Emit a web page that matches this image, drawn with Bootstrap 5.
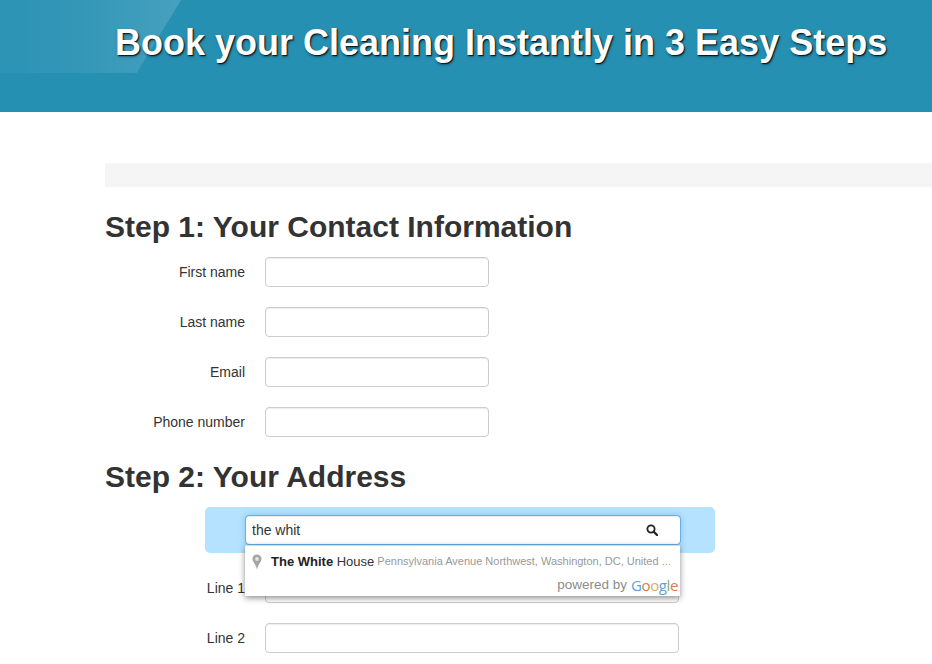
<!DOCTYPE html>
<html lang="en">
<head>
  <meta charset="UTF-8" />
  <meta name="viewport" content="width=device-width, initial-scale=1.0" />
  <title>Book your Cleaning</title>
  <link href="https://cdn.jsdelivr.net/npm/bootstrap@5.3.3/dist/css/bootstrap.min.css" rel="stylesheet">
  <style>
    html, body { height: 664px; overflow: hidden; }
    body { font-family: "Liberation Sans", Arial, sans-serif; font-size: 14px; color: #333; background: #fff; }
    .hero { height: 112px; background: #2690b3; padding-left: 115px; overflow: hidden; }
    .hero::before { content: ""; position: absolute; left: 0; top: 0; width: 181px; height: 73px; background: linear-gradient(90deg, rgba(255,255,255,.03) 0%, rgba(255,255,255,.05) 35%, rgba(255,255,255,.15) 100%); clip-path: polygon(0 0, 100% 0, 75.5% 100%, 0 100%); }
    .hero-title { font-size: 36px; font-weight: 700; line-height: 40px; color: #fff; text-shadow: 1px 1px 1px rgba(0,0,0,.8), 1px 2px 3px rgba(0,0,0,.35); margin: 23px 0 0; white-space: nowrap; }
    .page-body { padding-left: 105px; }
    .crumb-bar { height: 24px; margin-top: 51px; background: #f5f5f5; }
    .step-title { font-size: 30px; font-weight: 700; line-height: 33px; color: #333; margin: 23px 0 14px; }
    .field-row { margin-bottom: 20px; }
    .field-label { width: 140px; margin-right: 20px; text-align: right; color: #333; }
    .field-input { width: 224px; height: 30px; padding: 4px 6px; font-size: 14px; border-color: #ccc; border-radius: 4px; box-shadow: inset 0 1px 1px rgba(0,0,0,.075); }
    .field-wide { width: 414px; }
    .lookup-panel { width: 510px; height: 46px; margin: 0 0 20px 100px; padding: 8px 34px 8px 40px; background: #b5e3ff; border-radius: 5px; }
    .lookup-box { height: 30px; }
    .lookup-input { width: 436px; height: 30px; padding: 4px 34px 4px 6px; font-size: 14px; color: #333; border-color: #66afe9; border-radius: 4px; box-shadow: inset 0 1px 1px rgba(0,0,0,.075), 0 0 6px rgba(102,175,233,.6); }
    .lookup-icon { position: absolute; left: 401px; top: 9px; }
    .suggest-menu { position: absolute; left: 0; top: 30px; width: 435px; height: 51px; z-index: 5; background: #fff; border-top: 1px solid #d9d9d9; box-shadow: 0 2px 6px rgba(0,0,0,.45); }
    .suggest-item { height: 31px; padding: 0 7px; white-space: nowrap; }
    .suggest-pin { flex: 0 0 auto; margin-right: 9px; }
    .suggest-name { font-size: 13px; color: #333; margin-right: 3px; }
    .suggest-name b { color: #222; }
    .suggest-addr { font-size: 11px; color: #999; }
    .suggest-foot { padding-right: 2px; font-size: 13.5px; line-height: 16px; color: #8c8c8c; }
    .brand-word { font-family: "Open Sans", sans-serif; font-size: 15px; font-weight: 400; letter-spacing: -.4px; margin-left: 4px; }
    .c-blue { color: #5a9fe0; }
    .c-red { color: #cf7d50; }
    .c-yel { color: #d9ab62; }
    .c-grn { color: #7fae74; }
  </style>
</head>
<body>
  <header class="hero position-relative">
    <h1 class="hero-title position-relative">Book your Cleaning Instantly in 3 Easy Steps</h1>
  </header>

  <div class="page-body">
    <div class="crumb-bar"></div>

    <h2 class="step-title">Step 1: Your Contact Information</h2>
    <div class="field-row d-flex align-items-center">
      <label class="field-label" for="first_name">First name</label>
      <input type="text" id="first_name" class="form-control field-input" />
    </div>
    <div class="field-row d-flex align-items-center">
      <label class="field-label" for="last_name">Last name</label>
      <input type="text" id="last_name" class="form-control field-input" />
    </div>
    <div class="field-row d-flex align-items-center">
      <label class="field-label" for="email">Email</label>
      <input type="text" id="email" class="form-control field-input" />
    </div>
    <div class="field-row d-flex align-items-center">
      <label class="field-label" for="phone">Phone number</label>
      <input type="text" id="phone" class="form-control field-input" />
    </div>

    <h2 class="step-title">Step 2: Your Address</h2>
    <div class="lookup-panel">
      <div class="lookup-box position-relative">
        <input type="text" class="form-control lookup-input" value="the whit" />
        <svg class="lookup-icon" width="12" height="12" viewBox="0 0 12 12" fill="none" stroke="#222">
          <circle cx="5" cy="5" r="3.6" stroke-width="1.8"/>
          <path d="M7.800 7.800 11 11" stroke-width="2.300" stroke-linecap="round"/>
        </svg>
        <div class="suggest-menu">
          <div class="suggest-item d-flex align-items-center">
            <svg class="suggest-pin" width="10" height="16" viewBox="0 0 10 16">
              <path d="M5 0.5C2.4 0.5.5 2.4.5 5c0 3 3 4.500 4.500 10.500C6.500 9.500 9.500 8 9.500 5 9.500 2.400 7.600.5 5 .5Z" fill="#a6a6a6"/>
              <circle cx="5" cy="5" r="1.900" fill="#e4e4e4"/>
            </svg>
            <span class="suggest-name"><b>The White</b> House</span>
            <span class="suggest-addr">Pennsylvania Avenue Northwest, Washington, DC, United ...</span>
          </div>
          <div class="suggest-foot d-flex justify-content-end align-items-center">
            powered by
            <span class="brand-word"><span class="c-blue">G</span><span class="c-red">o</span><span class="c-yel">o</span><span class="c-blue">g</span><span class="c-grn">l</span><span class="c-red">e</span></span>
          </div>
        </div>
      </div>
    </div>
    <div class="field-row d-flex align-items-center">
      <label class="field-label" for="line1">Line 1</label>
      <input type="text" id="line1" class="form-control field-input field-wide" />
    </div>
    <div class="field-row d-flex align-items-center">
      <label class="field-label" for="line2">Line 2</label>
      <input type="text" id="line2" class="form-control field-input field-wide" />
    </div>
  </div>

  <script src="https://cdn.jsdelivr.net/npm/bootstrap@5.3.3/dist/js/bootstrap.bundle.min.js"></script>
</body>
</html>
